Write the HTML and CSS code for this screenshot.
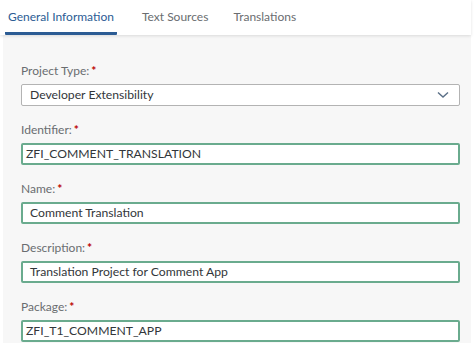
FILE: index.html
```html
<!DOCTYPE html>
<html lang="en">
<head>
  <meta charset="UTF-8">
  <title>Translation Project</title>
  <link rel="stylesheet" href="styles.css">
</head>
<body>
  <div class="page">
    <!-- Tabs -->
    <div class="tabs">
      <div class="tab active">General Information</div>
      <div class="tab">Text Sources</div>
      <div class="tab">Translations</div>
    </div>

    <!-- Form -->
    <div class="panel">
      <div class="field">
        <label class="label">Project Type:<span class="req">*</span></label>
        <div class="input select">
          <span>Developer Extensibility</span>
          <svg class="chevron" width="12" height="8" viewBox="0 0 12 8">
            <path d="M1 1.5 L6 6 L11 1.5" fill="none" stroke="#5a6f87" stroke-width="1.4"/>
          </svg>
        </div>
      </div>
      <div class="field">
        <label class="label">Identifier:<span class="req">*</span></label>
        <div class="input valid code">ZFI_COMMENT_TRANSLATION</div>
      </div>
      <div class="field">
        <label class="label">Name:<span class="req">*</span></label>
        <div class="input valid">Comment Translation</div>
      </div>
      <div class="field">
        <label class="label">Description:<span class="req">*</span></label>
        <div class="input valid">Translation Project for Comment App</div>
      </div>
      <div class="field">
        <label class="label">Package:<span class="req">*</span></label>
        <div class="input valid code">ZFI_T1_COMMENT_APP</div>
      </div>
    </div>
  </div>
</body>
</html>
```

FILE: styles.css
```css
/* General Styles */
body {
  margin: 0;
  background: #fff;
  font-family: 'Lato', sans-serif;
  color: #32363a;
}

.page {
  width: 468px;
  margin-left: 3px;
}

.tabs {
  display: flex;
  height: 35px;
  background: #fff;
  box-shadow: 0 1px 3px rgba(0, 0, 0, 0.12);
  position: relative;
  z-index: 1;
  margin-left: -3px;
  padding-left: 5px;
}

.tab {
  font-size: 12px;
  color: #6a6d70;
  margin-left: 25px;
  line-height: 34px;
}

.tab.active {
  color: #2c5c94;
  border-bottom: 3px solid #2c5c94;
  border-radius: 1px;
  height: 32px;
  padding: 0 3px;
  margin-left: 0;
}

.panel {
  background: #f7f7f7;
  padding: 26px 11px 4px 18px;
  height: 278px;
}

.field {
  margin-bottom: 14px;
}

.label {
  display: block;
  font-size: 12px;
  color: #6a6d70;
  line-height: 20px;
  margin-bottom: 3px;
}

.req {
  color: #bb0000;
  margin-left: 2px;
  font-weight: bold;
}

.input {
  height: 20px;
  line-height: 20px;
  background: #fff;
  border: 1px solid #b3b3b3;
  border-radius: 2px;
  font-size: 12.2px;
  padding: 0 8px;
  display: flex;
  align-items: center;
  justify-content: space-between;
}

.input.valid {
  border: 2px solid #6aab8e;
  height: 18px;
  padding: 0 7px;
}

.input.code {
  padding: 0 3px;
}

.chevron {
  margin-right: 2px;
}
```
